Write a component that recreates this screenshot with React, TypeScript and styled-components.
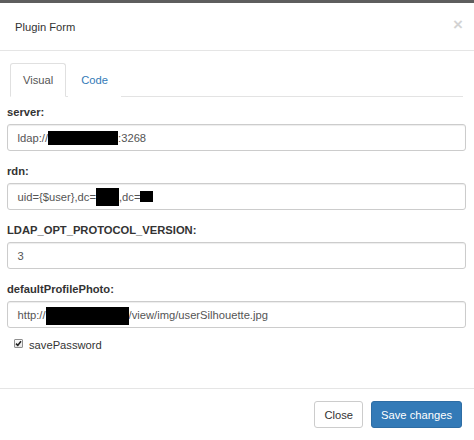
import styled, { createGlobalStyle } from "styled-components";

const GlobalStyle = createGlobalStyle`
  html, body {
    margin: 0;
    background: #fff;
  }

  body {
    color: #333;
    font-family: "Liberation Sans", Arial, sans-serif;
    font-size: 11.2px;
    line-height: 16px;
  }

  * {
    box-sizing: border-box;
  }
`;

const Modal = styled.div`
  background: #fff;
  border-top: 3px solid #5e5e5e;
  display: flex;
  flex-direction: column;
  height: 440px;
  width: 474px;
`;

const Header = styled.div`
  align-items: center;
  border-bottom: 1px solid #e5e5e5;
  display: flex;
  height: 48px;
  justify-content: space-between;
  padding: 0 11px 0 15px;
`;

const Title = styled.h4`
  font-size: 11.2px;
  font-weight: normal;
  line-height: 16px;
  margin: 0;
`;

const CloseX = styled.button`
  background: none;
  border: 0;
  color: #000;
  cursor: pointer;
  font-family: "Liberation Sans", Arial, sans-serif;
  font-size: 17px;
  font-weight: bold;
  line-height: 1;
  margin-top: -4px;
  opacity: 0.17;
  padding: 0;
`;

const Body = styled.div`
  flex: 1;
  padding: 12px 8px 0 7px;
`;

const TabNav = styled.ul`
  border-bottom: 1px solid #e3e3e3;
  display: flex;
  list-style: none;
  margin: 0 3px;
  padding: 0;
`;

const Tab = styled.li<{ $active?: boolean }>`
  background: #fff;
  border: 1px solid ${({ $active }) => ($active ? "#e0e0e0" : "transparent")};
  border-bottom-color: transparent;
  border-radius: 3px 3px 0 0;
  color: ${({ $active }) => ($active ? "#555" : "#337ab7")};
  cursor: pointer;
  margin: 0 2px -1px 0;
  padding: 8px 12px;
`;

const Form = styled.div`
  padding-top: 7px;
`;

const Group = styled.div`
  margin-bottom: 12px;
`;

const Label = styled.label`
  display: block;
  font-weight: bold;
  margin-bottom: 4px;
`;

const Field = styled.div`
  align-items: center;
  border: 1px solid #ccc;
  border-radius: 3px;
  box-shadow: inset 0 1px 1px rgba(0, 0, 0, 0.075);
  color: #555;
  display: flex;
  height: 27px;
  padding: 0 9.6px;
  white-space: pre;
`;

const Redacted = styled.span<{ $w: number; $h: number; $dy?: number }>`
  background: #000;
  display: inline-block;
  height: ${({ $h }) => $h}px;
  position: relative;
  top: ${({ $dy = 0 }) => $dy}px;
  width: ${({ $w }) => $w}px;
`;

const CheckRow = styled.label`
  align-items: flex-start;
  display: flex;
  gap: 6px;
  margin-top: -3px;
`;

const CheckBox = styled.span`
  align-items: center;
  background: linear-gradient(#fdfdfd, #e6e6e6);
  border: 1px solid #8f8f8f;
  border-radius: 1px;
  display: flex;
  height: 9px;
  justify-content: center;
  margin: 2px 0 0 7px;
  width: 9px;
`;

const Footer = styled.div`
  border-top: 1px solid #e5e5e5;
  display: flex;
  gap: 8px;
  justify-content: flex-end;
  padding: 12px;
`;

const Button = styled.button<{ $primary?: boolean }>`
  background: ${({ $primary }) => ($primary ? "#337ab7" : "#fff")};
  border: 1px solid ${({ $primary }) => ($primary ? "#2e6da4" : "#ccc")};
  border-radius: 3px;
  color: ${({ $primary }) => ($primary ? "#fff" : "#333")};
  cursor: pointer;
  font-family: "Liberation Sans", Arial, sans-serif;
  font-size: 11.2px;
  height: 27px;
  line-height: 16px;
  padding: 0 9px;
`;

export default function App() {
  return (
    <>
      <GlobalStyle />
      <Modal>
        <Header>
          <Title>Plugin Form</Title>
          <CloseX type="button">×</CloseX>
        </Header>
        <Body>
          <TabNav>
            <Tab $active>Visual</Tab>
            <Tab>Code</Tab>
          </TabNav>
          <Form>
            <Group>
              <Label>server:</Label>
              <Field>
                ldap://
                <Redacted $w={70} $h={14} />
                :3268
              </Field>
            </Group>
            <Group>
              <Label>rdn:</Label>
              <Field>
                {"uid={$user},dc="}
                <Redacted $w={23} $h={18} />
                ,dc=
                <Redacted $w={13} $h={11} />
              </Field>
            </Group>
            <Group>
              <Label>LDAP_OPT_PROTOCOL_VERSION:</Label>
              <Field>3</Field>
            </Group>
            <Group>
              <Label>defaultProfilePhoto:</Label>
              <Field>
                http://
                <Redacted $w={83} $h={18} $dy={1} />
                /view/img/userSilhouette.jpg
              </Field>
            </Group>
            <CheckRow>
              <CheckBox>
                <svg width="7" height="7" viewBox="0 0 7 7">
                  <path d="M1 3.6 L2.8 5.4 L6 1.2" fill="none" stroke="#222" strokeWidth="1.6" />
                </svg>
              </CheckBox>
              savePassword
            </CheckRow>
          </Form>
        </Body>
        <Footer>
          <Button type="button">Close</Button>
          <Button type="button" $primary>
            Save changes
          </Button>
        </Footer>
      </Modal>
    </>
  );
}
